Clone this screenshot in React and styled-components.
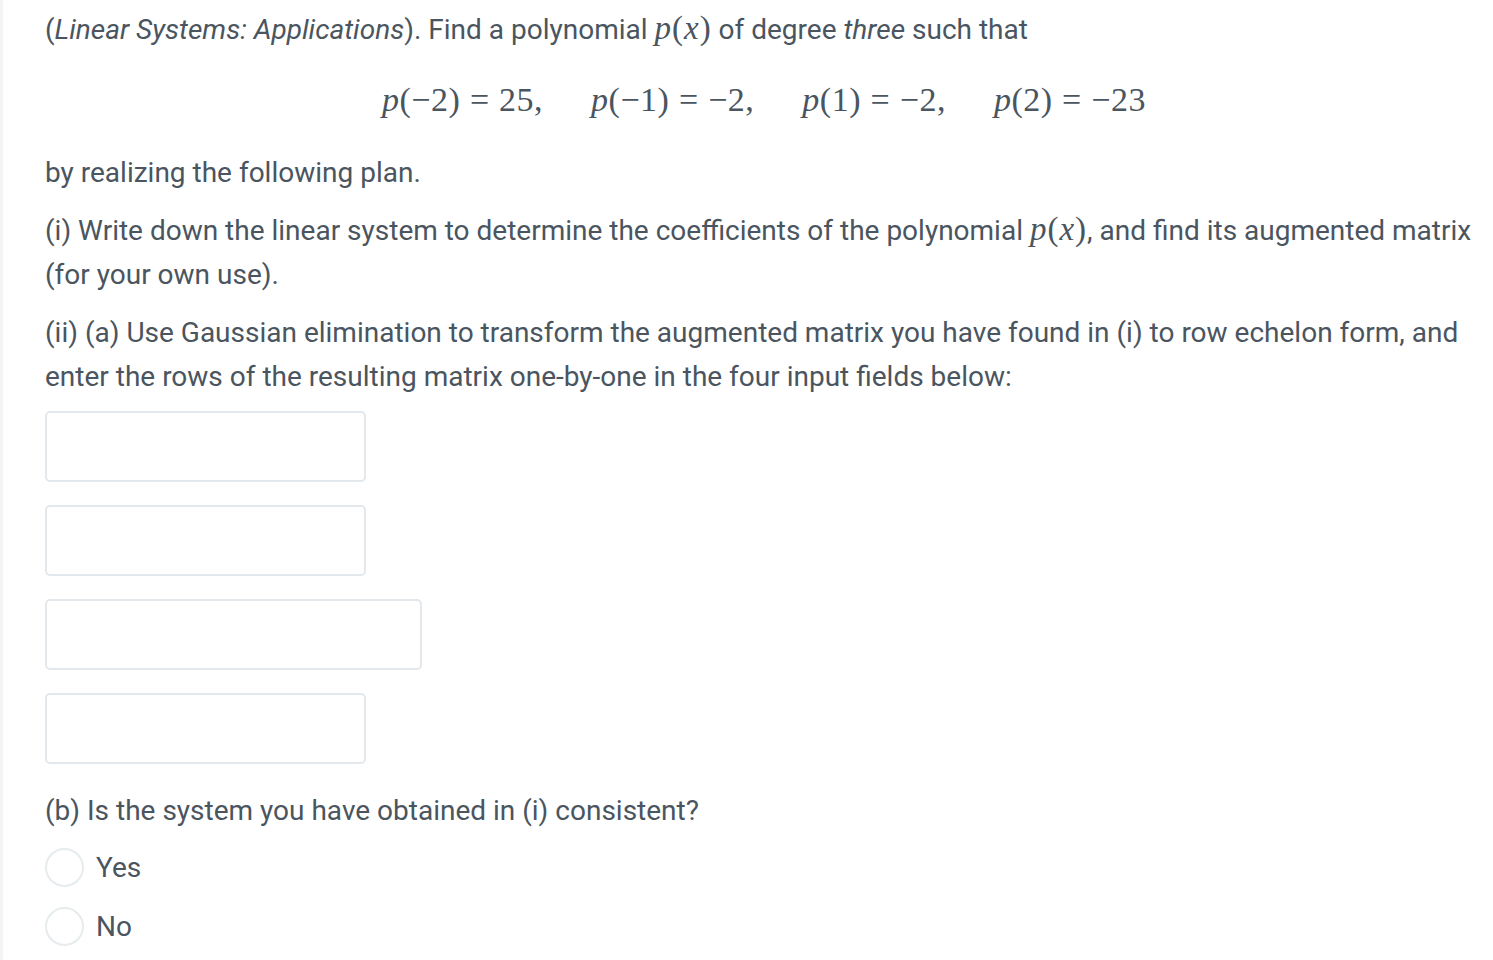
import React, {useState} from "react";
import styled, {createGlobalStyle} from "styled-components";

const GlobalStyle = createGlobalStyle`
  html, body {
    margin: 0;
    padding: 0;
    background: #fff;
  }
  body {
    font-family: Roboto, "Liberation Sans", sans-serif;
    color: #4a5560;
  }
`;

const rows = [
  {id: 1, width: 321},
  {id: 2, width: 321},
  {id: 3, width: 377},
  {id: 4, width: 321},
];

const conditions = [
  {arg: "−2", value: "25,"},
  {arg: "−1", value: "−2,"},
  {arg: "1", value: "−2,"},
  {arg: "2", value: "−23"},
];

const App = () => {
  const [answer, setAnswer] = useState("");

  return (
      <>
        <GlobalStyle/>
        <Page>
          <Text>
            (<em>Linear Systems: Applications</em>). Find a polynomial <M><i>p</i>(<i>x</i>)</M> of
            degree <em>three</em> such that
          </Text>
          <Display>
            {conditions.map((c) => (
                <Eq key={c.arg}>
                  <i>p</i>({c.arg})<Rel>=</Rel>{c.value}
                </Eq>
            ))}
          </Display>
          <Text>by realizing the following plan.</Text>
          <Text>
            (i) Write down the linear system to determine the coefficients of the polynomial{" "}
            <M><i>p</i>(<i>x</i>)</M>, and find its augmented matrix (for your own use).
          </Text>
          <Text>
            (ii) (a) Use Gaussian elimination to transform the augmented matrix you have found in (i) to
            row echelon form, and enter the rows of the resulting matrix one-by-one in the four input
            fields below:
          </Text>
          <Fields>
            {rows.map((r) => (
                <Field key={r.id} $width={r.width} type="text"/>
            ))}
          </Fields>
          <Question>(b) Is the system you have obtained in (i) consistent?</Question>
          <Options>
            {["Yes", "No"].map((opt) => (
                <Option key={opt} onClick={() => setAnswer(opt)}>
                  <Radio $checked={answer === opt}/>
                  {opt}
                </Option>
            ))}
          </Options>
        </Page>
      </>
  );
};

export default App;

const Page = styled.div`
  min-height: 960px;
  box-sizing: border-box;
  border-left: 3px solid #f2f4f6;
  padding: 8px 10px 0 42px;
  font-size: 28px;
  line-height: 44px;
`;

const Text = styled.p`
  margin: 0 0 14px;

  em {
    font-style: italic;
  }
`;

const M = styled.span`
  font-family: "Liberation Serif", "Times New Roman", serif;
  font-size: 33px;
  line-height: 0;
  letter-spacing: 1px;
  white-space: nowrap;
`;

const Display = styled.div`
  display: flex;
  justify-content: center;
  gap: 48px;
  margin: 26px 0 29px;
  font-family: "Liberation Serif", "Times New Roman", serif;
  font-size: 34px;
  line-height: 44px;
`;

const Eq = styled.span`
  white-space: nowrap;
  letter-spacing: 0.5px;
`;

const Rel = styled.span`
  margin: 0 0.28em;
`;

const Fields = styled.div`
  display: flex;
  flex-direction: column;
  align-items: flex-start;
  gap: 23px;
  margin: -2px 0 25px;
`;

const Field = styled.input`
  width: ${(p) => p.$width}px;
  height: 71px;
  box-sizing: border-box;
  border: 2px solid #e3e8ec;
  border-radius: 5px;
  background: #fff;
  outline: none;
`;

const Question = styled.p`
  margin: 0 0 15px;
`;

const Options = styled.div`
  display: flex;
  flex-direction: column;
  gap: 20px;
`;

const Option = styled.label`
  display: flex;
  align-items: center;
  gap: 12px;
  height: 39px;
  cursor: pointer;
`;

const Radio = styled.span`
  width: 39px;
  height: 39px;
  box-sizing: border-box;
  border-radius: 50%;
  border: 2px solid ${(p) => (p.$checked ? "#4a90d9" : "#e6ecee")};
  background: #fff;
`;
